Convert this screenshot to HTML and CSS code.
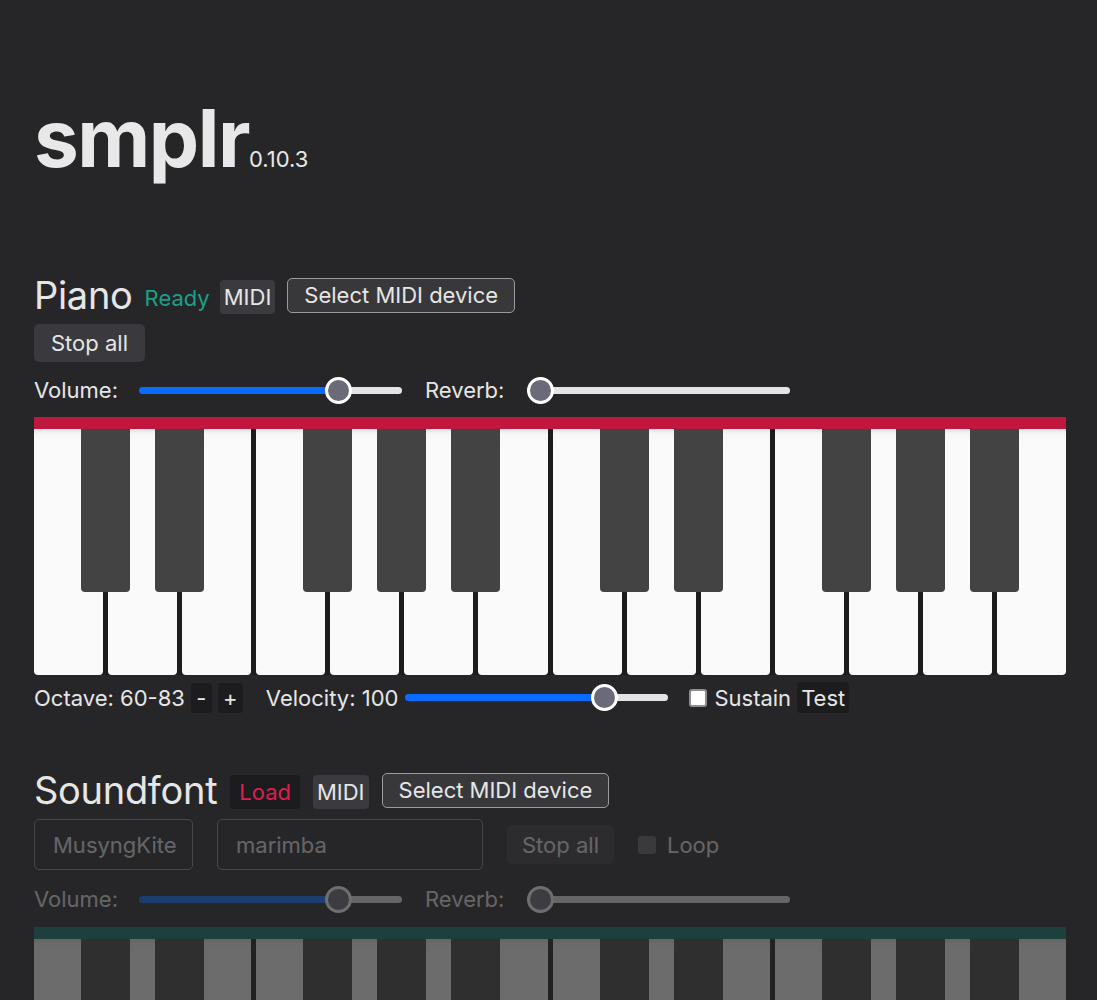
FILE: index.html
```html
<!DOCTYPE html>
<html lang="en">
<head>
<meta charset="utf-8">
<title>smplr</title>
<link rel="stylesheet" href="styles.css">
</head>
<body>
<div class="page">
  <h1 class="title">smplr<span class="version">0.10.3</span></h1>

  <section class="instrument">
    <div class="header">
      <h2 class="name">Piano</h2>
      <span class="status ready">Ready</span>
      <button class="badge">MIDI</button>
      <button class="outline">Select MIDI device</button>
    </div>
    <div class="row-stop">
      <button class="btn">Stop all</button>
    </div>
    <div class="sliders">
      <label class="lbl">Volume:</label>
      <input class="range" type="range" min="0" max="127" value="100" style="--fill: 200px">
      <label class="lbl reverb-lbl">Reverb:</label>
      <input class="range" type="range" min="0" max="1" value="0" style="--fill: 13px">
    </div>
    <div class="piano red">
      <div class="bar"></div>
      <div class="keys">
        <div class="white"></div><div class="white"></div><div class="white"></div><div class="white"></div>
        <div class="white"></div><div class="white"></div><div class="white"></div><div class="white"></div>
        <div class="white"></div><div class="white"></div><div class="white"></div><div class="white"></div>
        <div class="white"></div><div class="white"></div>
        <div class="black" style="--b:1"></div>
        <div class="black" style="--b:2"></div>
        <div class="black" style="--b:4"></div>
        <div class="black" style="--b:5"></div>
        <div class="black" style="--b:6"></div>
        <div class="black" style="--b:8"></div>
        <div class="black" style="--b:9"></div>
        <div class="black" style="--b:11"></div>
        <div class="black" style="--b:12"></div>
        <div class="black" style="--b:13"></div>
      </div>
    </div>
    <div class="controls">
      <span class="txt">Octave: 60-83</span>
      <button class="dark sq minus">-</button>
      <button class="dark sq plus">+</button>
      <span class="txt velocity">Velocity: 100</span>
      <input class="range vel" type="range" min="0" max="127" value="100" style="--fill: 198px">
      <input class="check" type="checkbox">
      <span class="txt sustain">Sustain</span>
      <button class="dark test">Test</button>
    </div>
  </section>

  <section class="instrument sf">
    <div class="header">
      <h2 class="name">Soundfont</h2>
      <button class="dark load">Load</button>
      <button class="badge">MIDI</button>
      <button class="outline">Select MIDI device</button>
    </div>
    <div class="disabled">
      <div class="inputs">
        <div class="field select">MusyngKite</div>
        <div class="field text">marimba</div>
        <button class="btn stop2">Stop all</button>
        <span class="loopbox"></span>
        <span class="txt loop">Loop</span>
      </div>
      <div class="sliders">
        <label class="lbl">Volume:</label>
        <input class="range" type="range" min="0" max="127" value="100" style="--fill: 200px">
        <label class="lbl reverb-lbl">Reverb:</label>
        <input class="range" type="range" min="0" max="1" value="0" style="--fill: 13px">
      </div>
      <div class="piano green">
        <div class="bar"></div>
        <div class="keys">
          <div class="white"></div><div class="white"></div><div class="white"></div><div class="white"></div>
          <div class="white"></div><div class="white"></div><div class="white"></div><div class="white"></div>
          <div class="white"></div><div class="white"></div><div class="white"></div><div class="white"></div>
          <div class="white"></div><div class="white"></div>
          <div class="black" style="--b:1"></div>
          <div class="black" style="--b:2"></div>
          <div class="black" style="--b:4"></div>
          <div class="black" style="--b:5"></div>
          <div class="black" style="--b:6"></div>
          <div class="black" style="--b:8"></div>
          <div class="black" style="--b:9"></div>
          <div class="black" style="--b:11"></div>
          <div class="black" style="--b:12"></div>
          <div class="black" style="--b:13"></div>
        </div>
      </div>
    </div>
  </section>
</div>
</body>
</html>
```

FILE: styles.css
```css
html, body {
  margin: 0;
  padding: 0;
  background: #262628;
  color: #e6e6e6;
  font-family: "Inter", "Noto Sans", sans-serif;
  height: 1000px;
  overflow: hidden;
}

.page {
  padding: 0 31px 0 34px;
}

button {
  font-family: inherit;
  color: inherit;
  border: none;
  margin: 0;
  cursor: pointer;
}

.title {
  margin: 0;
  padding-top: 98px;
  font-size: 80px;
  line-height: 80px;
  font-weight: 700;
  letter-spacing: -1.5px;
  color: #e8e8e8;
}

.version {
  font-size: 22px;
  font-weight: 400;
  letter-spacing: 0;
  margin-left: 0;
}

.instrument {
  display: flex;
  flex-direction: column;
}

.instrument:first-of-type {
  margin-top: 78px;
}

.header {
  display: flex;
  align-items: center;
  height: 36px;
}

.name {
  margin: 0;
  font-size: 38px;
  font-weight: 400;
  line-height: 40px;
  letter-spacing: -0.3px;
}

.status {
  font-size: 22px;
  margin-left: 12px;
  margin-top: 6px;
}

.ready {
  color: #1aa088;
}

.badge {
  background: #3b3b3f;
  font-size: 22px;
  height: 34px;
  padding: 0 4px;
  border-radius: 4px;
  margin-left: 10px;
  margin-top: 4px;
}

.outline {
  background: #38383b;
  border: 1px solid #9b9b9e;
  font-size: 22px;
  height: 35px;
  padding: 0 16px;
  border-radius: 5px;
  margin-left: 12px;
}

.row-stop {
  margin-top: 11px;
  display: flex;
}

.btn {
  background: #3a3a3e;
  font-size: 22px;
  height: 38px;
  padding: 0 17px;
  border-radius: 5px;
}

.sliders {
  display: flex;
  align-items: center;
  margin-top: 14px;
  height: 28px;
}

.lbl {
  font-size: 22px;
  width: 105px;
}

.reverb-lbl {
  margin-left: 23px;
  width: 102px;
}

.range {
  -webkit-appearance: none;
  appearance: none;
  width: 263px;
  height: 28px;
  margin: 0;
  background: transparent;
  padding: 0;
}

.range::-webkit-slider-runnable-track {
  height: 7px;
  border-radius: 4px;
  background: linear-gradient(to right, #0a6cff var(--fill), #e4e4e6 var(--fill));
}

.range::-webkit-slider-thumb {
  -webkit-appearance: none;
  appearance: none;
  box-sizing: border-box;
  width: 27px;
  height: 27px;
  border-radius: 50%;
  background: #6b6b78;
  border: 3px solid #ffffff;
  margin-top: -10px;
}

.piano {
  margin-top: 13px;
}

.bar {
  height: 12px;
}

.red .bar {
  background: #c0173f;
}

.green .bar {
  background: #0f766a;
}

.keys {
  position: relative;
  display: flex;
  gap: 5px;
  height: 246px;
  background: #1c1c1e;
}

.white {
  flex: 1;
  background: linear-gradient(#e2e2e2, #f7f7f7 5px, #fafafa 14px);
  border-radius: 0 0 4px 4px;
}

.black {
  position: absolute;
  top: 0;
  width: 49px;
  height: 163px;
  left: calc((100% + 5px) / 14 * var(--b) - 27px);
  background: #434343;
  border-radius: 0 0 4px 4px;
}

.controls {
  display: flex;
  align-items: center;
  margin-top: 7px;
  height: 31px;
}

.txt {
  font-size: 22px;
}

.dark {
  background: #1c1c1e;
  font-size: 22px;
  border-radius: 4px;
}

.sq {
  height: 30px;
  padding: 0;
}

.minus {
  width: 21px;
  margin-left: 6px;
}

.plus {
  width: 25px;
  margin-left: 6px;
}

.velocity {
  margin-left: 23px;
}

.vel {
  margin-left: 7px;
}

.check {
  -webkit-appearance: none;
  appearance: none;
  box-sizing: border-box;
  width: 18px;
  height: 18px;
  margin: 0 0 0 21px;
  background: #ffffff;
  border: 2px solid #8e8e93;
  border-radius: 3px;
}

.sustain {
  margin-left: 7px;
}

.test {
  height: 31px;
  padding: 0 4px;
  margin-left: 6px;
}

.sf {
  margin-top: 59px;
}

.load {
  color: #dc1f4f;
  height: 34px;
  padding: 0 9px;
  margin-left: 13px;
  margin-top: 4px;
}

.sf .badge {
  margin-left: 13px;
}

.sf .outline {
  margin-left: 13px;
}

.disabled {
  opacity: 0.33;
}

.inputs {
  display: flex;
  align-items: center;
  margin-top: 11px;
  height: 51px;
}

.field {
  box-sizing: border-box;
  height: 51px;
  border: 1.5px solid #8e8e93;
  border-radius: 5px;
  font-size: 22px;
  display: flex;
  align-items: center;
  padding-left: 18px;
}

.select {
  width: 159px;
}

.text {
  width: 266px;
  margin-left: 24px;
}

.stop2 {
  margin-left: 24px;
  height: 39px;
  padding: 0 15px;
}

.loopbox {
  width: 18px;
  height: 18px;
  margin-left: 24px;
  background: #646468;
  border-radius: 3px;
}

.loop {
  margin-left: 11px;
}

.disabled .sliders {
  margin-top: 15px;
}

.disabled .piano {
  margin-top: 14px;
}
```
